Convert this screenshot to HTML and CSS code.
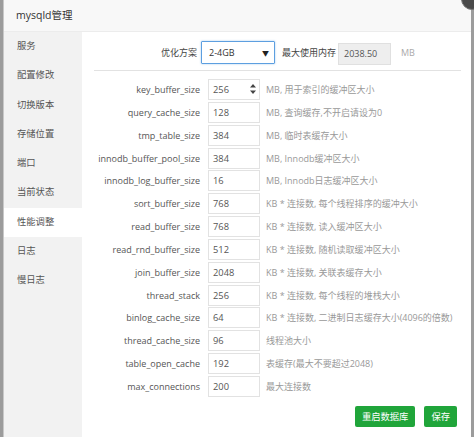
FILE: index.html
```html
<!DOCTYPE html>
<html lang="zh">
<head>
<meta charset="utf-8">
<title>mysqld管理</title>
<link rel="stylesheet" href="styles.css">
</head>
<body>
<div class="page">
  <div class="dialog">
    <div class="title">mysqld管理</div>
    <div class="body">
      <ul class="menu">
        <li>服务</li>
        <li>配置修改</li>
        <li>切换版本</li>
        <li>存储位置</li>
        <li>端口</li>
        <li>当前状态</li>
        <li class="active">性能调整</li>
        <li>日志</li>
        <li>慢日志</li>
      </ul>
      <div class="content">
        <div class="plan">
          <span class="plan-label">优化方案</span>
          <div class="select"><span>2-4GB</span><span class="caret">▼</span></div>
          <span class="mem-label">最大使用内存</span>
          <div class="mem-input">2038.50</div>
          <span class="unit">MB</span>
        </div>
        <div class="divider"></div>
        <div class="rows">
          <div class="row"><span class="label">key_buffer_size</span><div class="field spin">256<span class="spinner"><svg width="6" height="12" viewBox="0 0 6 12"><path d="M0 4.5 L3 1 L6 4.5 Z M0 7.5 L3 11 L6 7.5 Z" fill="#444"/></svg></span></div><span class="desc">MB, 用于索引的缓冲区大小</span></div>
          <div class="row"><span class="label">query_cache_size</span><div class="field">128</div><span class="desc">MB, 查询缓存,不开启请设为0</span></div>
          <div class="row"><span class="label">tmp_table_size</span><div class="field">384</div><span class="desc">MB, 临时表缓存大小</span></div>
          <div class="row"><span class="label">innodb_buffer_pool_size</span><div class="field">384</div><span class="desc">MB, Innodb缓冲区大小</span></div>
          <div class="row"><span class="label">innodb_log_buffer_size</span><div class="field">16</div><span class="desc">MB, Innodb日志缓冲区大小</span></div>
          <div class="row"><span class="label">sort_buffer_size</span><div class="field">768</div><span class="desc">KB * 连接数, 每个线程排序的缓冲大小</span></div>
          <div class="row"><span class="label">read_buffer_size</span><div class="field">768</div><span class="desc">KB * 连接数, 读入缓冲区大小</span></div>
          <div class="row"><span class="label">read_rnd_buffer_size</span><div class="field">512</div><span class="desc">KB * 连接数, 随机读取缓冲区大小</span></div>
          <div class="row"><span class="label">join_buffer_size</span><div class="field">2048</div><span class="desc">KB * 连接数, 关联表缓存大小</span></div>
          <div class="row"><span class="label">thread_stack</span><div class="field">256</div><span class="desc">KB * 连接数, 每个线程的堆栈大小</span></div>
          <div class="row"><span class="label">binlog_cache_size</span><div class="field">64</div><span class="desc">KB * 连接数, 二进制日志缓存大小(4096的倍数)</span></div>
          <div class="row"><span class="label">thread_cache_size</span><div class="field">96</div><span class="desc">线程池大小</span></div>
          <div class="row"><span class="label">table_open_cache</span><div class="field">192</div><span class="desc">表缓存(最大不要超过2048)</span></div>
          <div class="row"><span class="label">max_connections</span><div class="field">200</div><span class="desc">最大连接数</span></div>
        </div>
        <div class="actions">
          <button class="btn">重启数据库</button>
          <button class="btn">保存</button>
        </div>
      </div>
    </div>
  </div>
  <div class="close"></div>
</div>
</body>
</html>
```
FILE: styles.css
```css
* { box-sizing: border-box; }
html, body { margin: 0; padding: 0; }
body {
  width: 474px;
  height: 437px;
  overflow: hidden;
  font-family: "Open Sans", "Noto Sans CJK SC", sans-serif;
  font-size: 9px;
  color: #555;
}
.page {
  position: relative;
  display: flex;
  width: 474px;
  height: 437px;
  background: #9c9c9c;
  padding-left: 3px;
  padding-right: 3px;
}
.dialog {
  width: 468px;
  height: 437px;
  background: #fff;
  display: flex;
  flex-direction: column;
  border-left: 1px solid #c8c8c8;
}
.title {
  height: 32px;
  flex: none;
  background: #f8f8f8;
  border-bottom: 1px solid #ececec;
  padding-left: 12px;
  font-size: 10.5px;
  line-height: 31px;
  color: #333;
}
.body {
  flex: 1;
  display: flex;
}
.menu {
  list-style: none;
  margin: 0;
  padding: 0;
  width: 78px;
  background: #f2f2f2;
  flex: none;
}
.menu li {
  height: 29.3px;
  line-height: 28px;
  padding-left: 13px;
  color: #555;
  font-size: 9.3px;
}
.menu li.active {
  background: #fff;
}
.content {
  flex: 1;
  padding-top: 9px;
  display: flex;
  flex-direction: column;
}
.plan {
  display: flex;
  align-items: center;
  height: 23px;
}
.plan-label {
  width: 115px;
  text-align: right;
  margin-right: 4px;
  color: #444;
}
.select {
  width: 74px;
  height: 23px;
  border: 1px solid #5d9fe0;
  box-shadow: 0 0 2px rgba(93,159,224,.6);
  border-radius: 1px;
  display: flex;
  align-items: center;
  justify-content: space-between;
  padding: 0 5px 0 7px;
  color: #333;
}
.caret { font-size: 7px; color: #222; }
.mem-label {
  margin-left: 7px;
  margin-right: 2px;
  color: #444;
}
.mem-input {
  width: 53px;
  height: 22px;
  margin-top: 2px;
  background: #eee;
  border: 1px solid #e0e0e0;
  line-height: 20px;
  padding-left: 5px;
  color: #555;
}
.unit {
  margin-left: 10px;
  color: #aaa;
}
.divider {
  height: 1px;
  background: #e2e2e2;
  margin: 6px 10px 0 12px;
}
.rows {
  margin-top: 8px;
  display: flex;
  flex-direction: column;
  gap: 1.85px;
}
.row {
  display: flex;
  align-items: center;
  height: 21px;
}
.label {
  width: 118px;
  text-align: right;
  margin-right: 8px;
  color: #555;
}
.field {
  position: relative;
  width: 52px;
  height: 21px;
  border: 1px solid #e2e2e2;
  line-height: 19px;
  padding-left: 4px;
  color: #555;
  font-size: 9.3px;
}
.spinner {
  position: absolute;
  right: 3px;
  top: 3px;
  line-height: 0;
}
.desc {
  margin-left: 6px;
  color: #999;
}
.actions {
  display: flex;
  justify-content: flex-end;
  gap: 9px;
  margin-top: 9px;
  padding-right: 14px;
}
.btn {
  height: 21px;
  border: none;
  border-radius: 2px;
  background: #20a53a;
  color: #fff;
  font-family: "Open Sans", "Noto Sans CJK SC", sans-serif;
  font-size: 9.3px;
  padding: 0 7px;
}
.close {
  position: absolute;
  right: -9px;
  top: -12px;
  width: 22px;
  height: 22px;
  border-radius: 50%;
  background: #4a4a4a;
  border: 1px solid #777;
}
```
